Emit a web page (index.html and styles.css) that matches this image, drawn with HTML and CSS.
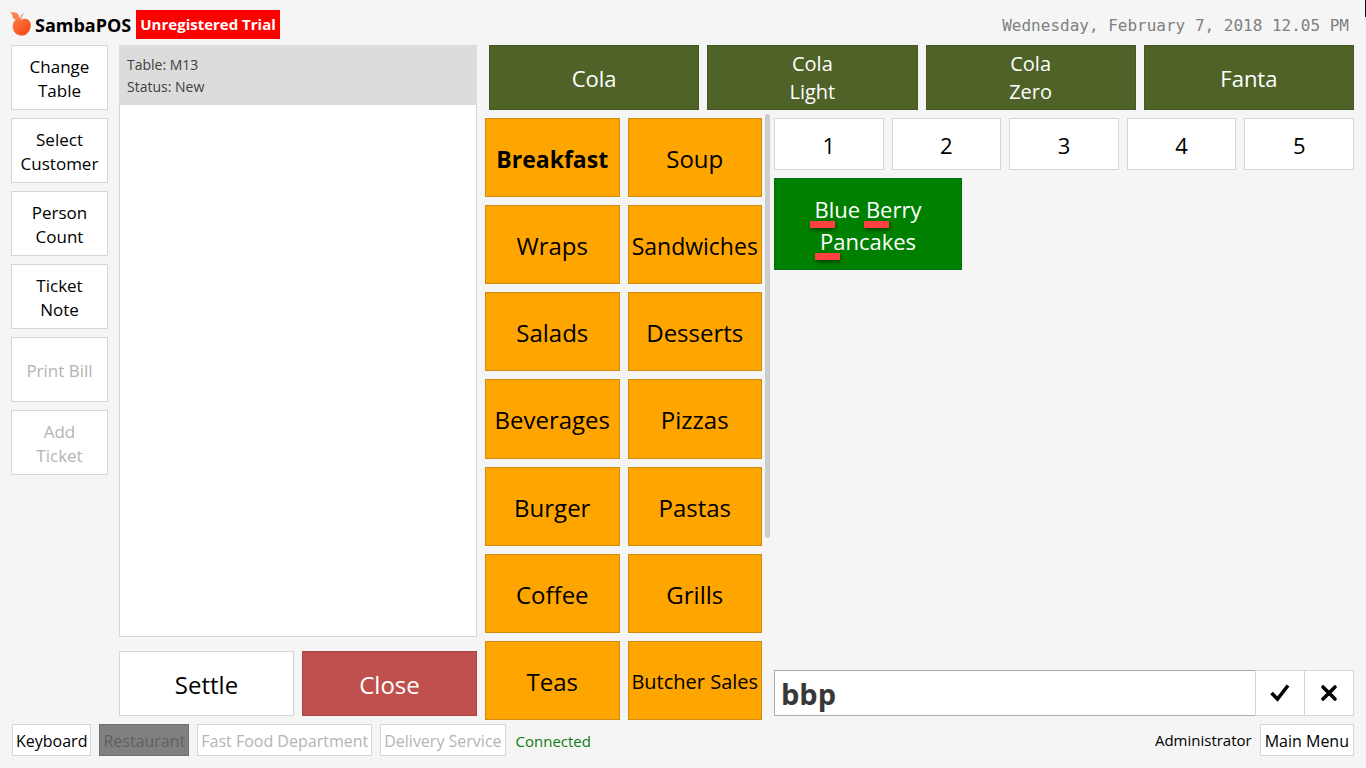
FILE: index.html
```html
<!DOCTYPE html>
<html lang="en">
<head>
<meta charset="utf-8">
<title>SambaPOS</title>
<link rel="stylesheet" href="styles.css">
</head>
<body>
<header class="topbar">
  <svg class="logo" viewBox="0 0 24 26" aria-hidden="true">
    <defs><linearGradient id="fruit" x1="0" y1="0" x2="1" y2="1"><stop offset="0" stop-color="#ff7a45"/><stop offset="1" stop-color="#f5420f"/></linearGradient></defs>
    <path fill="#fb8350" d="M0 1C4 2 7 0 9 5L10.500 9C6 10 2 8 2.500 4Z"/>
    <path fill="none" stroke="#f26a3d" stroke-width="1" d="M11 9C10.500 6 11.500 4 13.500 3"/>
    <path fill="url(#fruit)" d="M11.500 9C14 7 19 7 20.500 12C22 18 17 25 12 24.500C6 25 1.500 19 3 13C4.500 8 8.500 7 11.500 9Z"/>
  </svg>
  <span class="brand">SambaPOS</span>
  <span class="trial">Unregistered Trial</span>
  <time class="clock" datetime="2018-02-07T12:05">Wednesday, February 7, 2018 12.05 PM</time>
</header>
<main class="workspace">
  <nav class="side">
    <button class="btn">Change Table</button>
    <button class="btn">Select Customer</button>
    <button class="btn">Person Count</button>
    <button class="btn">Ticket Note</button>
    <button class="btn" disabled>Print Bill</button>
    <button class="btn" disabled>Add<br>Ticket</button>
  </nav>
  <section class="ticket">
    <div class="ticket-sheet">
      <div class="ticket-info">Table: M13<br>Status: New</div>
    </div>
    <div class="ticket-actions">
      <button class="btn large">Settle</button>
      <button class="btn large close">Close</button>
    </div>
  </section>
  <section class="menu">
    <div class="quick">
      <button class="btn quick-item">Cola</button>
      <button class="btn quick-item two-line">Cola<br>Light</button>
      <button class="btn quick-item two-line">Cola<br>Zero</button>
      <button class="btn quick-item">Fanta</button>
    </div>
    <div class="browser">
      <div class="categories">
        <button class="btn category selected">Breakfast</button>
        <button class="btn category">Soup</button>
        <button class="btn category">Wraps</button>
        <button class="btn category fit-long">Sandwiches</button>
        <button class="btn category">Salads</button>
        <button class="btn category">Desserts</button>
        <button class="btn category">Beverages</button>
        <button class="btn category">Pizzas</button>
        <button class="btn category">Burger</button>
        <button class="btn category">Pastas</button>
        <button class="btn category">Coffee</button>
        <button class="btn category">Grills</button>
        <button class="btn category">Teas</button>
        <button class="btn category fit-longest">Butcher Sales</button>
      </div>
      <div class="scroll-track"><div class="scroll-thumb"></div></div>
      <div class="products">
        <div class="numbers">
          <button class="btn number">1</button>
          <button class="btn number">2</button>
          <button class="btn number">3</button>
          <button class="btn number">4</button>
          <button class="btn number">5</button>
        </div>
        <div class="product-list">
          <button class="btn product"><span class="hit">B</span>lue <span class="hit inner">B</span>erry<br><span class="hit">P</span>ancakes</button>
        </div>
        <form class="search">
          <input class="search-box" type="text" value="bbp" aria-label="Search products">
          <button class="btn search-btn" type="button" aria-label="Accept"><svg viewBox="0 0 22 22" aria-hidden="true"><path fill="none" stroke="#000" stroke-width="3.600" d="M2.500 11L8.500 17L19 3.500"/></svg></button>
          <button class="btn search-btn" type="button" aria-label="Clear"><svg viewBox="0 0 22 22" aria-hidden="true"><path fill="none" stroke="#000" stroke-width="3.600" stroke-linecap="round" d="M5 5L17 17M17 5L5 17"/></svg></button>
        </form>
      </div>
    </div>
  </section>
</main>
<footer class="statusbar">
  <button class="btn small">Keyboard</button>
  <button class="btn small current" disabled>Restaurant</button>
  <button class="btn small" disabled>Fast Food Department</button>
  <button class="btn small" disabled>Delivery Service</button>
  <span class="connection">Connected</span>
  <span class="user">Administrator</span>
  <button class="btn small main-menu">Main Menu</button>
</footer>
</body>
</html>
```
FILE: styles.css
```css
* { box-sizing: border-box; }

body {
  position: relative;
  margin: 0;
  min-height: 100vh;
  display: flex;
  flex-direction: column;
  background: #f5f5f5;
  color: #000;
  font-family: "Open Sans", "Noto Sans", sans-serif;
}

/* dark edge in the window corner */
body::after {
  content: "";
  position: absolute;
  top: 0;
  right: 0;
  width: 1px;
  height: 17px;
  background: #10141c;
}

.btn {
  margin: 0;
  padding: 2px 4px 0;
  border: 1px solid #d6d6d6;
  border-radius: 0;
  background: #fff;
  color: #000;
  font-family: inherit;
  font-size: 17px;
  line-height: 24px;
}
.btn:disabled { color: #b4b4b4; }

.topbar {
  display: flex;
  align-items: center;
  height: 45px;
  padding: 4px 17px 0 10px;
}
.logo { width: 24px; height: 26px; margin-bottom: 2px; }
.brand { margin-left: 1px; font-size: 18px; font-weight: 700; }
.trial {
  margin-left: 5px;
  padding: 0 4px;
  background: #f00;
  color: #fff;
  font-size: 15px;
  font-weight: 700;
  line-height: 29px;
}
.clock {
  margin-left: auto;
  padding-top: 2px;
  color: #808080;
  font-family: "DejaVu Sans Mono", monospace;
  font-size: 16px;
}

.workspace {
  flex: 1;
  display: grid;
  grid-template-columns: 97px minmax(0, 377fr) minmax(0, 869fr);
  padding: 0 12px 0 11px;
}
.side {
  display: flex;
  flex-direction: column;
  gap: 8px;
}
.side .btn { height: 65px; }

.ticket {
  display: flex;
  flex-direction: column;
  gap: 14px;
  margin: 0 8px 4px 11px;
}
.ticket-sheet {
  flex: 1;
  border: 1px solid #d6d6d6;
  background: #fff;
}
.ticket-info {
  margin: -1px -1px 0;
  padding: 9px 8px 7px;
  background: #dcdcdc;
  color: #404040;
  font-size: 14px;
  line-height: 22px;
}
.ticket-actions {
  display: grid;
  grid-template-columns: 1fr 1fr;
  gap: 8px;
}
.large { height: 65px; font-size: 24px; }
.close { background: #c0504d; border-color: #a84643; color: #fff; }

.menu {
  display: flex;
  flex-direction: column;
  gap: 8px;
}
.quick {
  display: grid;
  grid-template-columns: repeat(4, 1fr);
  gap: 8px;
  margin-left: 4px;
}
.quick-item {
  height: 65px;
  padding-top: 0;
  background: #4f6228;
  border-color: #465723;
  color: #fff;
  font-size: 22px;
}
.two-line { font-size: 20px; line-height: 28px; }

.browser { flex: 1; display: flex; }
.categories {
  flex: 277 1 0;
  display: grid;
  grid-template-columns: repeat(2, minmax(0, 1fr));
  grid-auto-rows: 1fr;
  gap: 8px;
}
.category {
  padding: 3px 0 0;
  background: #ffa500;
  border-color: #cf8a10;
  font-size: 24px;
}
.selected,
.fit-long { font-size: 23px; }
.selected { font-weight: 700; }
.fit-longest { font-size: 20px; }
.scroll-track { width: 5px; margin: -4px 4px 0 3px; }
.scroll-thumb { height: 70%; border-radius: 3px; background: #cdcdcd; }

.products {
  flex: 580 1 0;
  display: flex;
  flex-direction: column;
  gap: 8px;
  margin-bottom: 4px;
}
.numbers {
  display: grid;
  grid-template-columns: repeat(5, 1fr);
  gap: 8px;
}
.number { height: 52px; font-size: 22px; }
.product-list {
  flex: 1;
  display: grid;
  grid-template-columns: repeat(3, 1fr);
  gap: 8px;
  align-content: start;
}
.product {
  height: 92px;
  background: #008000;
  border-color: #00700a;
  color: #fff;
  font-size: 22px;
  line-height: 32px;
}

/* marks the letters matched by the search text */
.hit { position: relative; }
.hit::after {
  content: "";
  position: absolute;
  left: -5px;
  bottom: -4px;
  width: 25px;
  height: 7px;
  background: #ff4040;
  box-shadow: 1px 2px 4px rgba(0, 0, 0, 0.5);
}
.inner::after { left: -2px; }

.search { display: flex; height: 46px; }
.search-box {
  flex: 1;
  min-width: 0;
  padding: 1px 6px 0;
  border: 1px solid #ababab;
  border-right: 0;
  border-radius: 0;
  background: #fff;
  color: #383838;
  font-family: inherit;
  font-size: 29px;
  font-weight: 700;
  outline: 0;
}
.search-btn {
  display: flex;
  align-items: center;
  justify-content: center;
  width: 50px;
  padding: 0;
}
.search-btn + .search-btn { margin-left: -1px; }
.search-btn svg { width: 22px; height: 22px; }

.statusbar {
  display: flex;
  align-items: center;
  gap: 8px;
  padding: 4px 12px 12px;
}
.small { height: 32px; padding: 2px 3px 0; font-size: 16px; }
.main-menu { padding: 2px 4px 0; }
.current, .current:disabled { background: #808080; border-color: #707070; color: #606060; }
.connection { padding: 2px 0 0 2px; color: #107c10; font-size: 15px; }
.user { margin-left: auto; font-size: 15px; }
```
